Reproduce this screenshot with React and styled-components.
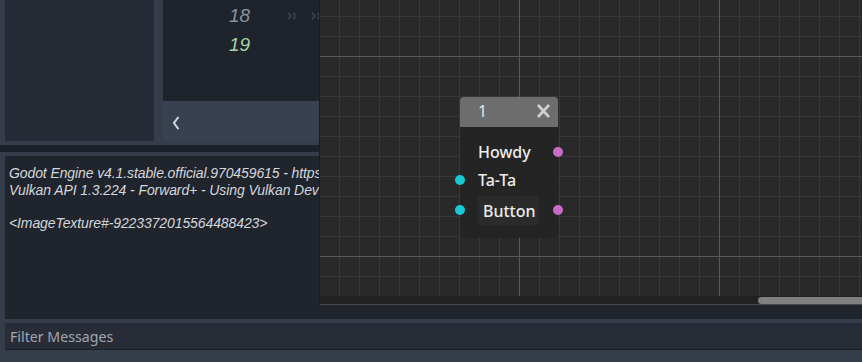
import React from "react";
import styled, { createGlobalStyle } from "styled-components";

const Global = createGlobalStyle`
  html, body { margin: 0; padding: 0; background: #353c4a; overflow: hidden; }
  * { box-sizing: border-box; }
`;

const Root = styled.div`
  position: relative;
  width: 862px;
  height: 362px;
  background: #353c4a;
  display: flex;
  flex-direction: column;
  overflow: hidden;
  font-family: "Noto Sans", sans-serif;
`;

const TopRow = styled.div`
  height: 145px;
  display: flex;
  gap: 9px;
  padding: 0 0 4px 5px;
`;

const LeftDock = styled.div`
  width: 149px;
  background: #262b35;
`;

const CodeColumn = styled.div`
  flex: 1;
  display: flex;
  flex-direction: column;
`;

const CodeArea = styled.div`
  height: 101px;
  background: #1f232b;
  display: flex;
  flex-direction: column;
  padding: 1px 0 0 66px;
`;

const CodeLine = styled.div`
  height: 29px;
  display: flex;
  align-items: center;
  gap: 38px;
`;

const LineNum = styled.span`
  font-family: "Liberation Sans", sans-serif;
  font-style: italic;
  font-size: 19px;
  width: 20px;
  color: ${(p) => (p.$active ? "#a6d2a3" : "#8c929b")};
`;

const Markers = styled.span`
  display: flex;
  gap: 15px;
  padding-top: 1px;
`;

const Band = styled.div`
  flex: 1;
  background: #394150;
  display: flex;
  align-items: center;
  padding-left: 9px;
  padding-top: 4px;
`;

const DarkStrip = styled.div`
  height: 7px;
  background: #1c2028;
`;

const OutputPanel = styled.div`
  margin: 4px 0 0 5px;
  height: 163px;
  background: #20242c;
  padding: 9px 0 0 4px;
  overflow: hidden;
  font-family: "Liberation Sans", sans-serif;
  font-style: italic;
  font-size: 14px;
  letter-spacing: -0.1px;
  line-height: 16.8px;
  color: #d4d7dc;
  white-space: pre;
`;

const OutLine = styled.div`
  height: 16.8px;
`;

const FilterBar = styled.div`
  margin: 4px 0 0 5px;
  height: 27px;
  background: #272c36;
  border-bottom: 1px solid #1b1f26;
  display: flex;
  align-items: center;
  padding-left: 5px;
  padding-top: 1px;
  font-size: 14.2px;
  color: #a2a7af;
`;

const GraphWindow = styled.div`
  position: absolute;
  left: 319px;
  top: 0;
  width: 543px;
  height: 305px;
  border-left: 1px solid #1c1c1c;
  background-color: #292929;
  background-image:
    linear-gradient(to right, #585858 1px, transparent 1px),
    linear-gradient(to bottom, #585858 1px, transparent 1px),
    linear-gradient(to right, #383838 1px, transparent 1px),
    linear-gradient(to bottom, #383838 1px, transparent 1px);
  background-size: 200px 200px, 200px 200px, 20px 20px, 20px 20px;
  background-position: 199px 0, 0 56px, 19px 0, 0 16px;
  overflow: hidden;
`;

const HScroll = styled.div`
  position: absolute;
  left: 0;
  right: 0;
  bottom: 0;
  height: 9px;
  background: #212121;
  border-bottom: 1px solid #4a4a4a;
  display: flex;
  justify-content: flex-end;
  padding-top: 1px;
`;

const Thumb = styled.div`
  width: 104px;
  height: 7px;
  background: #808080;
  border-radius: 4px 0 0 4px;
`;

const Node = styled.div`
  position: absolute;
  left: 140px;
  top: 97px;
  width: 98px;
`;

const NodeTitle = styled.div`
  height: 30px;
  background: #6d6d6d;
  border-radius: 4px 4px 0 0;
  display: flex;
  align-items: center;
  justify-content: space-between;
  padding: 0 7px 2px 18px;
  font-size: 16px;
  color: #e6e6e6;
`;

const NodeBody = styled.div`
  height: 111px;
  background: #242424;
  border-radius: 0 0 3px 3px;
  padding: 11px 0 0;
  display: flex;
  flex-direction: column;
`;

const Slot = styled.div`
  position: relative;
  height: ${(p) => p.$h || 28}px;
  display: flex;
  align-items: center;
  padding-left: 18px;
  font-size: 16px;
  font-weight: 500;
  color: #ececec;
`;

const Port = styled.span`
  position: absolute;
  top: 50%;
  width: 10px;
  height: 10px;
  margin-top: -5px;
  border-radius: 50%;
  background: ${(p) => p.$color};
  ${(p) => (p.$side === "left" ? "left: -5px;" : "right: -5px;")}
`;

const SlotButton = styled.div`
  align-self: flex-end;
  width: 61px;
  height: 29px;
  background: #2b2b2b;
  border-radius: 3px;
  display: flex;
  align-items: center;
  padding-left: 5px;
`;

const Marker = () => (
  <svg width="9" height="8" viewBox="0 0 9 8">
    <path d="M1 1 L4 4 L1 7" stroke="#3c4659" strokeWidth="1.6" fill="none" />
    <path d="M7.5 0.5 V7.5" stroke="#3c4659" strokeWidth="1.6" />
  </svg>
);

const CYAN = "#17c9d4";
const MAGENTA = "#c96cc9";

export default function App() {
  return (
    <>
      <Global />
      <Root>
        <TopRow>
          <LeftDock />
          <CodeColumn>
            <CodeArea>
              <CodeLine>
                <LineNum>18</LineNum>
                <Markers>
                  <Marker />
                  <Marker />
                </Markers>
              </CodeLine>
              <CodeLine>
                <LineNum $active>19</LineNum>
              </CodeLine>
            </CodeArea>
            <Band>
              <svg width="8" height="14" viewBox="0 0 8 14">
                <path d="M6 1.5 L2 7 L6 12.5" stroke="#d4d8de" strokeWidth="2" fill="none" strokeLinecap="round" />
              </svg>
            </Band>
          </CodeColumn>
        </TopRow>
        <DarkStrip />
        <OutputPanel>
          <OutLine>Godot Engine v4.1.stable.official.970459615 - https://godotengine.org</OutLine>
          <OutLine>Vulkan API 1.3.224 - Forward+ - Using Vulkan Device #0: NVIDIA - GeForce GTX</OutLine>
          <OutLine> </OutLine>
          <OutLine>&lt;ImageTexture#-9223372015564488423&gt;</OutLine>
        </OutputPanel>
        <FilterBar>Filter Messages</FilterBar>
        <GraphWindow>
          <Node>
            <NodeTitle>
              <span>1</span>
              <svg width="15" height="14" viewBox="0 0 15 14">
                <path d="M2 1 L13 13 M13 1 L2 13" stroke="#cfcfcf" strokeWidth="2.6" />
              </svg>
            </NodeTitle>
            <NodeBody>
              <Slot>
                Howdy
                <Port $side="right" $color={MAGENTA} />
              </Slot>
              <Slot>
                <Port $side="left" $color={CYAN} />
                Ta-Ta
              </Slot>
              <Slot $h={31}>
                <Port $side="left" $color={CYAN} />
                <SlotButton>Button</SlotButton>
                <Port $side="right" $color={MAGENTA} />
              </Slot>
            </NodeBody>
          </Node>
          <HScroll>
            <Thumb />
          </HScroll>
        </GraphWindow>
      </Root>
    </>
  );
}
